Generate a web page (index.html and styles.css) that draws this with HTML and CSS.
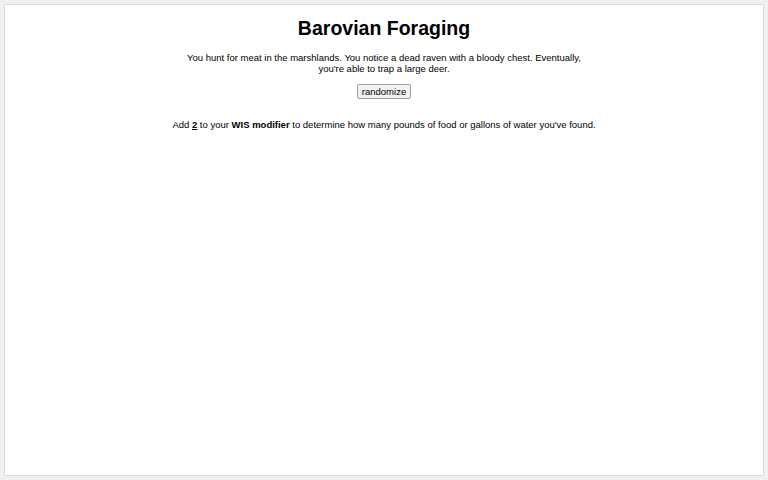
FILE: index.html
```html
<!DOCTYPE html>
<html>
<head>
<meta charset="utf-8">
<title>Barovian Foraging</title>
<link rel="stylesheet" href="styles.css">
</head>
<body>
<main class="panel">
  <h1 class="title">Barovian Foraging</h1>
  <p class="story">You hunt for meat in the marshlands. You notice a dead raven with a bloody chest. Eventually, you're able to trap a large deer.</p>
  <button class="roll" type="button">randomize</button>
  <p class="rule">Add <u><b>2</b></u> to your <b>WIS modifier</b> to determine how many pounds of food or gallons of water you've found.</p>
</main>
</body>
</html>
```
FILE: styles.css
```css
html, body {
  margin: 0;
  height: 100%;
}
body {
  background: #f0f0f0;
  padding: 4px;
  box-sizing: border-box;
  font-family: "Liberation Sans", Arial, sans-serif;
  color: #000;
}
.panel {
  box-sizing: border-box;
  height: 472px;
  background: #fff;
  border: 1px solid #dcdcdc;
  display: flex;
  flex-direction: column;
  align-items: center;
  padding-top: 11px;
}
.title {
  margin: 0;
  font-size: 19.5px;
  line-height: 24px;
  font-weight: bold;
}
.story {
  margin: 12px 0 0;
  width: 404px;
  font-size: 9.5px;
  line-height: 11px;
  text-align: center;
}
.roll {
  margin-top: 10px;
  font-family: "Liberation Sans", Arial, sans-serif;
  font-size: 9.5px;
  line-height: 11px;
  padding: 1px 4px;
  background: #f2f2f2;
  border: 1px solid #a0a0a0;
  border-radius: 2px;
  color: #000;
}
.rule {
  margin: 20px 0 0;
  font-size: 9.5px;
  line-height: 11px;
  text-align: center;
}
```
